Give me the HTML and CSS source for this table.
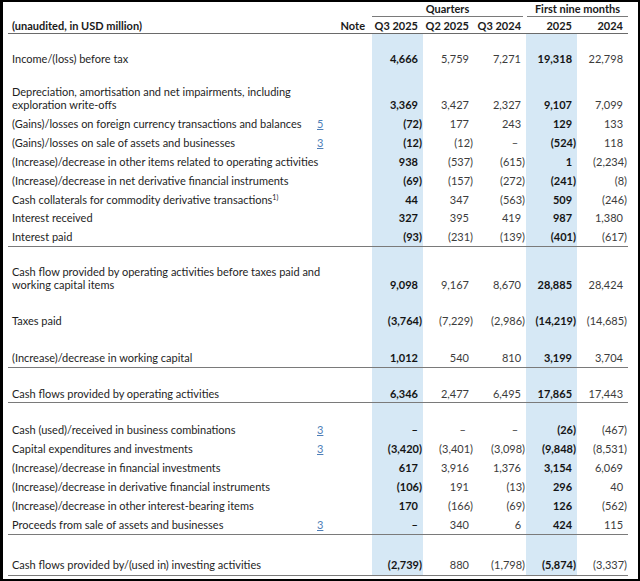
FILE: index.html
```html
<!DOCTYPE html>
<html lang="en">
<head>
<meta charset="utf-8">
<title>Cash flow statement</title>
<link rel="stylesheet" href="styles.css">
</head>
<body>
<div class="frame">
<table class="cf">
<colgroup>
<col class="c-label"><col class="c-note"><col class="c-n1"><col class="c-n2"><col class="c-n3"><col class="c-n4"><col class="c-n5">
</colgroup>
<thead>
<tr class="h1">
<th></th><th></th>
<th colspan="3"><div class="grp grp-q">Quarters</div></th>
<th colspan="2"><div class="grp grp-n">First nine months</div></th>
</tr>
<tr class="h2">
<th class="lbl">(unaudited, in USD million)</th>
<th class="note">Note</th>
<th class="num">Q3 2025</th><th class="num">Q2 2025</th><th class="num">Q3 2024</th><th class="num">2025</th><th class="num">2024</th>
</tr>
</thead>
<tbody>
<tr class="sp sp15"><td></td><td></td><td class="hl"></td><td></td><td></td><td class="hl"></td><td></td></tr>
<tr><td class="lbl">Income/(loss) before tax</td><td class="note"></td><td class="num hl b">4,666</td><td class="num">5,759</td><td class="num">7,271</td><td class="num hl b">19,318</td><td class="num">22,798</td></tr>
<tr class="sp sp14"><td></td><td></td><td class="hl"></td><td></td><td></td><td class="hl"></td><td></td></tr>
<tr><td class="lbl">Depreciation, amortisation and net impairments, including<br>exploration write-offs</td><td class="note"></td><td class="num hl b">3,369</td><td class="num">3,427</td><td class="num">2,327</td><td class="num hl b">9,107</td><td class="num">7,099</td></tr>
<tr><td class="lbl">(Gains)/losses on foreign currency transactions and balances</td><td class="note"><a class="ref">5</a></td><td class="num hl b"><span class="ng">(72)</span></td><td class="num">177</td><td class="num">243</td><td class="num hl b">129</td><td class="num">133</td></tr>
<tr><td class="lbl">(Gains)/losses on sale of assets and businesses</td><td class="note"><a class="ref">3</a></td><td class="num hl b"><span class="ng">(12)</span></td><td class="num"><span class="ng">(12)</span></td><td class="num"><span class="d">–</span></td><td class="num hl b"><span class="ng">(524)</span></td><td class="num">118</td></tr>
<tr><td class="lbl">(Increase)/decrease in other items related to operating activities</td><td class="note"></td><td class="num hl b">938</td><td class="num"><span class="ng">(537)</span></td><td class="num"><span class="ng">(615)</span></td><td class="num hl b">1</td><td class="num"><span class="ng">(2,234)</span></td></tr>
<tr><td class="lbl">(Increase)/decrease in net derivative financial instruments</td><td class="note"></td><td class="num hl b"><span class="ng">(69)</span></td><td class="num"><span class="ng">(157)</span></td><td class="num"><span class="ng">(272)</span></td><td class="num hl b"><span class="ng">(241)</span></td><td class="num"><span class="ng">(8)</span></td></tr>
<tr class="r18"><td class="lbl">Cash collaterals for commodity derivative transactions<sup>1)</sup></td><td class="note"></td><td class="num hl b">44</td><td class="num">347</td><td class="num"><span class="ng">(563)</span></td><td class="num hl b">509</td><td class="num"><span class="ng">(246)</span></td></tr>
<tr><td class="lbl">Interest received</td><td class="note"></td><td class="num hl b">327</td><td class="num">395</td><td class="num">419</td><td class="num hl b">987</td><td class="num">1,380</td></tr>
<tr class="rule"><td class="lbl">Interest paid</td><td class="note"></td><td class="num hl b"><span class="ng">(93)</span></td><td class="num"><span class="ng">(231)</span></td><td class="num"><span class="ng">(139)</span></td><td class="num hl b"><span class="ng">(401)</span></td><td class="num"><span class="ng">(617)</span></td></tr>
<tr class="sp sp15"><td></td><td></td><td class="hl"></td><td></td><td></td><td class="hl"></td><td></td></tr>
<tr><td class="lbl">Cash flow provided by operating activities before taxes paid and<br>working capital items</td><td class="note"></td><td class="num hl b">9,098</td><td class="num">9,167</td><td class="num">8,670</td><td class="num hl b">28,885</td><td class="num">28,424</td></tr>
<tr class="sp sp17"><td></td><td></td><td class="hl"></td><td></td><td></td><td class="hl"></td><td></td></tr>
<tr><td class="lbl">Taxes paid</td><td class="note"></td><td class="num hl b"><span class="ng">(3,764)</span></td><td class="num"><span class="ng">(7,229)</span></td><td class="num"><span class="ng">(2,986)</span></td><td class="num hl b"><span class="ng">(14,219)</span></td><td class="num"><span class="ng">(14,685)</span></td></tr>
<tr class="sp sp18"><td></td><td></td><td class="hl"></td><td></td><td></td><td class="hl"></td><td></td></tr>
<tr class="rule"><td class="lbl">(Increase)/decrease in working capital</td><td class="note"></td><td class="num hl b">1,012</td><td class="num">540</td><td class="num">810</td><td class="num hl b">3,199</td><td class="num">3,704</td></tr>
<tr class="sp sp16"><td></td><td></td><td class="hl"></td><td></td><td></td><td class="hl"></td><td></td></tr>
<tr class="rule tight"><td class="lbl">Cash flows provided by operating activities</td><td class="note"></td><td class="num hl b">6,346</td><td class="num">2,477</td><td class="num">6,495</td><td class="num hl b">17,865</td><td class="num">17,443</td></tr>
<tr class="sp sp17"><td></td><td></td><td class="hl"></td><td></td><td></td><td class="hl"></td><td></td></tr>
<tr><td class="lbl">Cash (used)/received in business combinations</td><td class="note"><a class="ref">3</a></td><td class="num hl b">–</td><td class="num"><span class="d">–</span></td><td class="num"><span class="d">–</span></td><td class="num hl b"><span class="ng">(26)</span></td><td class="num"><span class="ng">(467)</span></td></tr>
<tr><td class="lbl">Capital expenditures and investments</td><td class="note"><a class="ref">3</a></td><td class="num hl b"><span class="ng">(3,420)</span></td><td class="num"><span class="ng">(3,401)</span></td><td class="num"><span class="ng">(3,098)</span></td><td class="num hl b"><span class="ng">(9,848)</span></td><td class="num"><span class="ng">(8,531)</span></td></tr>
<tr><td class="lbl">(Increase)/decrease in financial investments</td><td class="note"></td><td class="num hl b">617</td><td class="num">3,916</td><td class="num">1,376</td><td class="num hl b">3,154</td><td class="num">6,069</td></tr>
<tr><td class="lbl">(Increase)/decrease in derivative financial instruments</td><td class="note"></td><td class="num hl b"><span class="ng">(106)</span></td><td class="num">191</td><td class="num"><span class="ng">(13)</span></td><td class="num hl b">296</td><td class="num">40</td></tr>
<tr><td class="lbl">(Increase)/decrease in other interest-bearing items</td><td class="note"></td><td class="num hl b">170</td><td class="num"><span class="ng">(166)</span></td><td class="num"><span class="ng">(69)</span></td><td class="num hl b">126</td><td class="num"><span class="ng">(562)</span></td></tr>
<tr class="rule"><td class="lbl">Proceeds from sale of assets and businesses</td><td class="note"><a class="ref">3</a></td><td class="num hl b">–</td><td class="num">340</td><td class="num">6</td><td class="num hl b">424</td><td class="num">115</td></tr>
<tr class="sp sp20"><td></td><td></td><td class="hl"></td><td></td><td></td><td class="hl"></td><td></td></tr>
<tr class="rule loose"><td class="lbl">Cash flows provided by/(used in) investing activities</td><td class="note"></td><td class="num hl b"><span class="ng">(2,739)</span></td><td class="num">880</td><td class="num"><span class="ng">(1,798)</span></td><td class="num hl b"><span class="ng">(5,874)</span></td><td class="num"><span class="ng">(3,337)</span></td></tr>
</tbody>
</table>
</div>
</body>
</html>
```
FILE: styles.css
```css
html, body {
  margin: 0;
  padding: 0;
  background: #fff;
}

.frame {
  box-sizing: border-box;
  width: 640px;
  height: 581px;
  border-style: solid;
  border-color: #000;
  border-width: 2px 2px 2px 3px;
  padding-left: 5px;
  background: #fff;
  overflow: hidden;
  font-family: Lato, "Liberation Sans", sans-serif;
  color: #1e1e1e;
}

.cf {
  width: 620px;
  table-layout: fixed;
  border-collapse: separate;
  border-spacing: 0;
}

.c-label { width: 297px; }
.c-note { width: 67px; }
.c-n1 { width: 51px; }
.c-n2 { width: 51px; }
.c-n3 { width: 52px; }
.c-n4 { width: 51px; }
.c-n5 { width: 51px; }

.cf th,
.cf td {
  padding: 0;
  font-size: 11px;
  line-height: 13px;
  white-space: nowrap;
  vertical-align: bottom;
}

.cf th {
  font-weight: 700;
  color: #1a1a1a;
}

/* header row 1 */
.h1 th {
  text-align: center;
}
.grp {
  padding-bottom: 1px;
  border-bottom: 1px solid #7a7a7a;
}
.grp-q { margin-right: 3px; }
.grp-n { margin-left: 1px; }

/* header row 2 */
.h2 th {
  padding-top: 2px;
  padding-bottom: 1px;
  border-bottom: 1px solid #6a6a6a;
}
.h2 th.lbl {
  text-align: left;
  padding-left: 4px;
}
.h2 th.note {
  text-align: right;
  padding-right: 7px;
}
.h2 th.num {
  text-align: right;
  padding-right: 5px;
}

/* body rows */
.cf tbody td {
  padding-top: 3px;
  padding-bottom: 3px;
}
.cf tbody td.lbl {
  padding-left: 4px;
}
.cf tbody td.note {
  padding-left: 12px;
}
.cf tbody td.num {
  text-align: right;
  padding-right: 5px;
  color: #3c3c3c;
}
.cf tbody td.b {
  font-weight: 700;
  color: #141414;
}
.hl {
  background: #d6e8f5;
}

.ng { margin-right: -4px; }
.d { margin-right: 3px; }

.r18 td { padding-bottom: 2px !important; }
.rule td { border-bottom: 1px solid #7a7a7a; }
.tight td { padding-bottom: 2px !important; }
.loose td { padding-bottom: 4px !important; }

.sp td { padding: 0 !important; }
.sp13 td { height: 13px; }
.sp14 td { height: 14px; }
.sp15 td { height: 15px; }
.sp16 td { height: 16px; }
.sp17 td { height: 17px; }
.sp18 td { height: 18px; }
.sp20 td { height: 20px; }

.ref {
  color: #4f7fb8;
  text-decoration: underline;
}

sup {
  font-size: 7px;
  line-height: 0;
  vertical-align: 4px;
}
```
